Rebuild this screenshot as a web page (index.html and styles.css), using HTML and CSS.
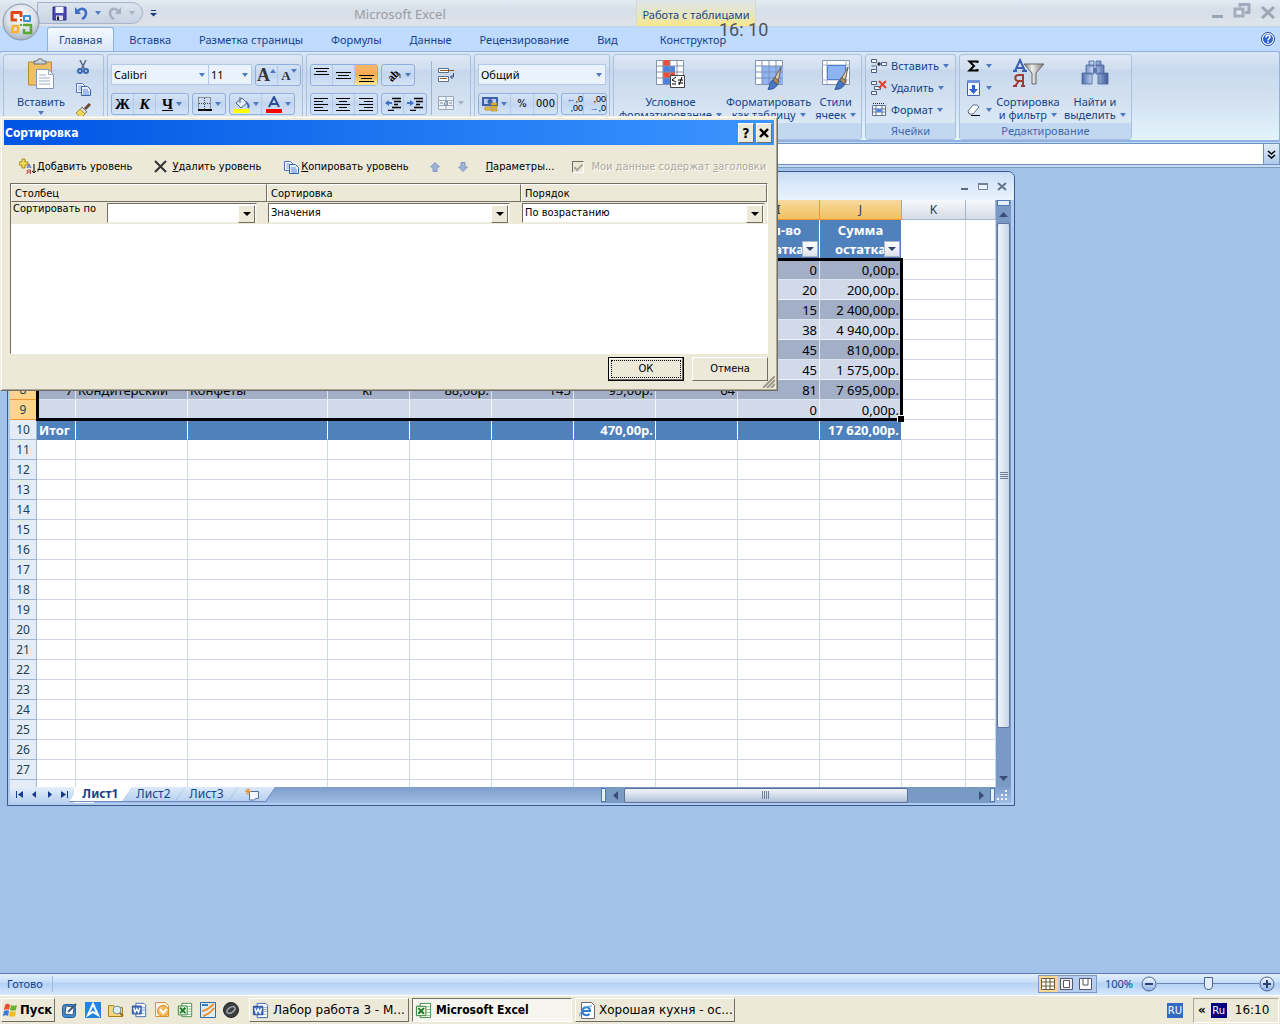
FILE: index.html
```
<!DOCTYPE html>
<html lang="ru">
 <head>
  <meta charset="UTF-8" />
  <meta name="viewport" content="width=device-width, initial-scale=1.0" />
  <title>Microsoft Excel</title>
  <link rel="stylesheet" href="styles.css" />
 </head>
 <body>
  <!-- shared icons -->
  <svg class="defs" aria-hidden="true">
   <defs>
    <linearGradient id="g-blue" x1="0" y1="0" x2="0" y2="1"><stop offset="0" stop-color="#f4f8ff" /><stop offset="1" stop-color="#8fb0e8" /></linearGradient>
    <linearGradient id="g-steel" x1="0" y1="0" x2="1" y2="0"><stop offset="0" stop-color="#4a6cae" /><stop offset=".4" stop-color="#c3d4f2" /><stop offset="1" stop-color="#3e5c9c" /></linearGradient>
    <linearGradient id="g-grey" x1="0" y1="0" x2="1" y2="0"><stop offset="0" stop-color="#777" /><stop offset=".4" stop-color="#eee" /><stop offset="1" stop-color="#777" /></linearGradient>
    <radialGradient id="g-orb" cx=".5" cy=".35" r=".65"><stop offset="0" stop-color="#fff" /><stop offset=".6" stop-color="#dbe1e8" /><stop offset="1" stop-color="#a4b0c0" /></radialGradient>
    <symbol id="i-copy" viewBox="0 0 16 16">
     <path d="M1.500 2.500h6l2 2v7h-8z" fill="#fff" stroke="#4a72b8" /><path d="M3 5h4M3 7h4M3 9h4" stroke="#7fa0d8" />
     <path d="M6.500 5.500h6l3 3v6h-9z" fill="#e8f0ff" stroke="#3a62a8" /><path d="M8 9h5M8 11h6M8 13h6" stroke="#5f86cc" />
    </symbol>
    <symbol id="i-brush" viewBox="0 0 16 32">
     <path d="M15 1L8 13l4 3z" fill="#d8c9b4" stroke="#6d5a48" /><path d="M8 12l5 4-2 4-5-4z" fill="#b08a50" stroke="#555" /><path d="M6 15l5 5c-2 4-6 5-10 5 2-3 2-8 5-10z" fill="#4878c8" stroke="#2d508c" />
    </symbol>
    <symbol id="i-word" viewBox="0 0 18 18">
     <path d="M5.500 1.500h9l2 2v13h-11z" fill="#fff" stroke="#3a62b0" /><path d="M12 6h4M12 8h4M12 10h4M7 13h8" stroke="#8aa6dc" />
     <path d="M1.500 4.500h10v9h-10z" fill="#4672c4" stroke="#27468c" /><path d="M3 6.500l1.500 5 2-4 2 4L10 6.500" fill="none" stroke="#fff" stroke-width="1.500" />
    </symbol>
    <symbol id="i-excel" viewBox="0 0 18 18">
     <path d="M5.500 1.500h11v15h-11z" fill="#fff" stroke="#3d8a3d" /><path d="M12 5h4M12 8h4M12 11h4M12 14h4" stroke="#7cb87c" />
     <path d="M1.500 4.500h10v10h-10z" fill="#e9f6e4" stroke="#2b7a2b" /><path d="M3.500 6.500l6 6M9.500 6.500l-6 6" stroke="#1f7a28" stroke-width="2.200" />
    </symbol>
   </defs>
  </svg>

  <header class="titlebar">
   <div class="quick-access">
    <button class="flat" aria-label="Сохранить"><svg width="15" height="15" viewBox="0 0 15 15"><path d="M1 1h13v13H1z" fill="#4848b0" stroke="#2c2c80" /><path d="M3.500 1h8v6h-8z" fill="#f4f6ff" /><path d="M4 9.500h7V14H4z" fill="#dde" /><path d="M5 10.500h2V14H5z" fill="#223" /></svg></button>
    <button class="flat" aria-label="Отменить"><svg width="14" height="14" viewBox="0 0 14 14"><path d="M4 5c3-4 8-2 8 2 0 3-2 5-4 6" fill="none" stroke="#3c6cc8" stroke-width="2.500" /><path d="M1 1v7h6z" fill="#3c6cc8" /></svg></button>
    <i class="tri"></i>
    <button class="flat" aria-label="Вернуть"><svg width="14" height="14" viewBox="0 0 14 14"><path d="M10 5C7 1 2 3 2 7c0 3 2 5 4 6" fill="none" stroke="#a4afbf" stroke-width="2.500" /><path d="M13 1v7H7z" fill="#a4afbf" /></svg></button>
    <i class="tri tri-off"></i>
   </div>
   <button class="flat customize" aria-label="Настройка панели"><svg width="7" height="7" viewBox="0 0 7 7"><path d="M1 .5h5" stroke="#1b3a77" /><path d="M0 3h7L3.500 6.500z" fill="#1b3a77" /></svg></button>
   <div class="app-title">Microsoft Excel</div>
   <div class="context-title">Работа с таблицами</div>
   <div class="win-buttons">
    <button class="flat" aria-label="Свернуть"><svg width="12" height="17" viewBox="0 0 12 17"><path d="M0 13h11v3H0z" fill="#9aa5b4" /></svg></button>
    <button class="flat" aria-label="Восстановить"><svg width="18" height="18" viewBox="0 0 18 18"><path d="M7 5V2.500h9v8h-4" fill="none" stroke="#9fabba" stroke-width="3" /><path d="M2 7h8v7H2z" fill="#e6ebf1" stroke="#a3aebd" stroke-width="3" /></svg></button>
    <button class="flat" aria-label="Закрыть"><svg width="16" height="18" viewBox="0 0 16 18"><path d="M2 5l12 11M14 5L2 16" stroke="#9ba7b5" stroke-width="3" /></svg></button>
   </div>
   <button class="office-button" aria-label="Office">
    <svg width="38" height="38" viewBox="0 0 38 38">
     <circle cx="19" cy="19" r="18" fill="url(#g-orb)" stroke="#8795ab" />
     <g fill="none" stroke-width="3" stroke-linejoin="round">
      <path d="M15 17H10V9.500h9V14" stroke="#dc4a1c" /><path d="M22 13h6v5h-6z" stroke="#3f8fd8" stroke-width="2" />
      <path d="M11 23h5v6h-6z" stroke="#f6b42c" stroke-width="2.500" /><path d="M21 22h8v8h-7v-4" stroke="#5da830" stroke-width="2.500" />
     </g>
     <path d="M18 16h2v2h-2z" fill="#dc4a1c" /><path d="M18 21h2v2h-2z" fill="#5da830" />
    </svg>
   </button>
   <span class="osd-clock">16: 10</span>
  </header>

  <nav class="tabs">
   <a class="tab tab-active" href="#home">Главная</a>
   <a class="tab" href="#insert">Вставка</a>
   <a class="tab" href="#layout">Разметка страницы</a>
   <a class="tab" href="#formulas">Формулы</a>
   <a class="tab" href="#data">Данные</a>
   <a class="tab" href="#review">Рецензирование</a>
   <a class="tab" href="#view">Вид</a>
   <a class="tab tab-context" href="#design">Конструктор</a>
   <button class="flat help" aria-label="Справка"><svg width="14" height="14" viewBox="0 0 14 14"><circle cx="7" cy="7" r="6.500" fill="#fff" stroke="#2a4a90" /><circle cx="7" cy="7" r="5" fill="#2d62d0" /><path d="M5 5.500c0-3 4-3 4-.5C9 6.500 7 6.500 7 8.500M7 9.500v1.500" fill="none" stroke="#fff" stroke-width="1.500" /></svg></button>
  </nav>

  <section class="ribbon">
   <div class="group g-clip">
    <div class="group-body">
     <button class="big paste">
      <svg width="28" height="32" viewBox="0 0 28 32"><path d="M1.500 4h23v23h-23z" fill="#efbf62" stroke="#b98a34" /><path d="M7 6V3h3c0-3 6-3 6 0h3v3z" fill="#ccd0d8" stroke="#6a6f78" /><path d="M9.500 11.500h12l5 5v14h-17z" fill="#fff" stroke="#8496b4" /><path d="M21.500 11.500v5h5M12 17h7M12 20h11M12 23h11M12 26h11" fill="none" stroke="#9aa9c4" /></svg>
      <span>Вставить</span><i class="tri"></i>
     </button>
     <div class="small-col">
      <button class="flat" aria-label="Вырезать"><svg width="16" height="16" viewBox="0 0 16 16"><path d="M5 1l5 10M11 1L6 11" stroke="#5a6a80" stroke-width="1.600" /><circle cx="5" cy="12" r="2" fill="none" stroke="#3a66b0" stroke-width="2" /><circle cx="11" cy="12" r="2" fill="none" stroke="#3a66b0" stroke-width="2" /></svg></button>
      <button class="flat" aria-label="Копировать"><svg width="16" height="16"><use href="#i-copy" /></svg></button>
      <button class="flat" aria-label="Формат по образцу"><svg width="16" height="16" viewBox="0 0 16 16"><path d="M15 1l-5 5" stroke="#6b4a30" stroke-width="3" /><path d="M7 4l5 5-3 2-4-4z" fill="#ddd" stroke="#777" /><path d="M5 6l5 5-4 4-5-5z" fill="#f1d458" stroke="#b09028" /></svg></button>
     </div>
    </div>
    <div class="group-label"></div>
   </div>

   <div class="group g-font">
    <div class="group-body rows">
     <div class="row">
      <div class="joined"><span class="combo font-name"><select aria-label="Шрифт"><option>Calibri</option></select></span><span class="combo font-size"><select aria-label="Размер"><option>11</option></select></span></div>
      <div class="btns"><button class="serif grow" aria-label="Увеличить">A<i class="tri tri-up"></i></button><button class="serif shrink" aria-label="Уменьшить">A<i class="tri"></i></button></div>
     </div>
     <div class="row">
      <div class="btns"><button class="serif">Ж</button><button class="serif italic">К</button><button class="serif under wide"><u>Ч</u><i class="tri"></i></button></div>
      <div class="btns"><button class="wide" aria-label="Границы"><svg width="14" height="14" viewBox="0 0 14 14"><path d="M.5 .5h12v12M.5 .5v12M6.500 1v12M1 6.500h12" fill="none" stroke="#444" stroke-dasharray="1 1" /><path d="M0 13h14" stroke="#000" stroke-width="2" /></svg><i class="tri"></i></button></div>
      <div class="btns"><button class="wide" aria-label="Заливка"><svg width="17" height="17" viewBox="0 0 17 17"><path d="M3 7l6-5 5 5-6 5z" fill="#e4ecf8" stroke="#48607f" /><path d="M13 6c3 2 3 4 2 6" fill="none" stroke="#3a66b8" stroke-width="2" /><path d="M7 1v6" stroke="#48607f" /><path d="M0 13h16v4H0z" fill="#ff0" /></svg><i class="tri"></i></button><button class="wide" aria-label="Цвет текста"><svg width="16" height="17" viewBox="0 0 16 17"><path d="M3 11l5-10 5 10M5 8h6" fill="none" stroke="#2c4f94" stroke-width="2" /><path d="M0 13h16v4H0z" fill="#f00" /></svg><i class="tri"></i></button></div>
     </div>
    </div>
    <div class="group-label"></div>
   </div>

   <div class="group g-align">
    <div class="group-body">
     <div class="rows">
      <div class="row">
       <div class="btns"><button aria-label="По верхнему краю"><svg width="15" height="16" viewBox="0 0 15 16"><path d="M0 1.500h15M2 4.500h11M0 7.500h15" stroke="#000" /></svg></button><button aria-label="По середине"><svg width="15" height="16" viewBox="0 0 15 16"><path d="M0 5.500h15M2 8.500h11M0 11.500h15" stroke="#000" /></svg></button><button class="pressed" aria-label="По нижнему краю"><svg width="15" height="16" viewBox="0 0 15 16"><path d="M0 8.500h15M2 11.500h11M0 14.500h15" stroke="#000" /></svg></button></div>
       <div class="btns"><button class="wide" aria-label="Ориентация"><svg width="16" height="16" viewBox="0 0 16 16"><text class="ab" x="1" y="12" transform="rotate(-45 7 8)">ab</text><path d="M6 15l8-8M14 11V7h-4" fill="none" stroke="#444" /></svg><i class="tri"></i></button></div>
      </div>
      <div class="row">
       <div class="btns"><button aria-label="По левому краю"><svg width="15" height="14" viewBox="0 0 15 14"><path d="M0 1.500h14M0 4.500h9M0 7.500h14M0 10.500h9M0 13.500h14" stroke="#000" /></svg></button><button aria-label="По центру"><svg width="15" height="14" viewBox="0 0 15 14"><path d="M0 1.500h14M3 4.500h8M0 7.500h14M3 10.500h8M0 13.500h14" stroke="#000" /></svg></button><button aria-label="По правому краю"><svg width="15" height="14" viewBox="0 0 15 14"><path d="M0 1.500h14M5 4.500h9M0 7.500h14M5 10.500h9M0 13.500h14" stroke="#000" /></svg></button></div>
       <div class="btns"><button aria-label="Уменьшить отступ"><svg width="16" height="14" viewBox="0 0 16 14"><path d="M7 1.500h9M9 4.500h7M9 7.500h4M7 10.500h9M3 13.500h6" stroke="#000" stroke-width="1.500" /><path d="M0 6l4-3v2h3v2H4v2z" fill="#3f6fc8" /></svg></button><button aria-label="Увеличить отступ"><svg width="16" height="14" viewBox="0 0 16 14"><path d="M7 1.500h9M9 4.500h7M9 7.500h4M7 10.500h9M3 13.500h6" stroke="#000" stroke-width="1.500" /><path d="M7 6L3 3v2H0v2h3v2z" fill="#3f6fc8" /></svg></button></div>
      </div>
     </div>
     <div class="wrap-col">
      <button class="flat" aria-label="Перенос текста"><svg width="17" height="16" viewBox="0 0 17 16"><path d="M.5 1.500h10v4H.5zM.5 9.500h10v5H.5z" fill="#fff" stroke="#5d708c" /><path d="M2 3.500h14M2 11.500h7" stroke="#8a5a2c" /><path d="M15.500 6v4h-3m2-2l-2 2 2 2" fill="none" stroke="#34507c" /></svg></button>
      <button class="flat" aria-label="Объединить"><svg width="16" height="14" viewBox="0 0 16 14"><path d="M.5 .5h15v13H.5zM.5 4.500h15M.5 9.500h15M8 .5v4M8 9.500v4" fill="#eef2f8" stroke="#9aa9be" /><path d="M2 7h3M11 7h3" stroke="#7b8ca6" /><path d="M7 5.500h2.500V9H6.500V7h3" fill="none" stroke="#7b8ca6" /></svg><i class="tri tri-off"></i></button>
     </div>
    </div>
    <div class="group-label"></div>
   </div>

   <div class="group g-num">
    <div class="group-body rows">
     <div class="row"><span class="combo num-format"><select aria-label="Числовой формат"><option>Общий</option></select></span></div>
     <div class="row">
      <div class="btns"><button class="wide" aria-label="Денежный формат"><svg width="16" height="16" viewBox="0 0 16 16"><path d="M0 1h16v9H0z" fill="#3d62a8" /><path d="M2 3h12v5H2z" fill="#b8cdf0" /><circle cx="8" cy="5.500" r="2.500" fill="#3d62a8" /><path d="M9 7h6v2H9zM9 10h6v2H9zM9 13h6v2H9zM3 11h5v3H3z" fill="#f0c040" stroke="#a57816" stroke-width=".6" /></svg><i class="tri"></i></button><button class="pct">%</button><button class="pct">000</button></div>
      <div class="btns digits"><button><i>←</i>,0<br />,00</button><button>,00<br /><i>→</i>,0</button></div>
     </div>
    </div>
    <div class="group-label"></div>
   </div>

   <div class="group g-styles">
    <div class="group-body">
     <button class="big">
      <svg width="32" height="32" viewBox="0 0 32 32"><path d="M2.500 2.500h27v24h-27z" fill="#fff" stroke="#8393ac" /><path d="M9 2h7v24H9z" fill="#e5503c" /><path d="M9 8h12v6H9z" fill="#4a82e4" /><path d="M9 20h7v6H9z" fill="#4a82e4" /><path d="M9 14h12v6H9z" fill="#e5503c" /><path d="M2 8h28M2 14h28M2 20h28M9 2v24M16 2v24M23 2v24" stroke="#8393ac" /><path d="M16.500 17.500h14v12h-14z" fill="#fff" stroke="#444" /><path d="M22 19l-4 3 4 2M18 26h4M24 22h5M24 25h5M28 19l-3 8" fill="none" stroke="#000" /></svg>
      <span>Условное</span><span>форматирование<i class="tri"></i></span>
     </button>
     <button class="big">
      <svg width="32" height="32" viewBox="0 0 32 32"><path d="M2.500 2.500h27v24h-27z" fill="#fff" stroke="#8393ac" /><path d="M9 8h21v18H9z" fill="#8fb4f4" /><path d="M2 8h28M2 14h28M2 20h28M9 2v24M16 2v24M23 2v24" stroke="#7b8fb8" /><use href="#i-brush" x="12" y="8" width="19" height="30" /></svg>
      <span>Форматировать</span><span>как таблицу<i class="tri"></i></span>
     </button>
     <button class="big">
      <svg width="32" height="32" viewBox="0 0 32 32"><path d="M2.500 2.500h27v24h-27z" fill="#fff" stroke="#8393ac" /><path d="M2 7h28M2 22h28M7 2v24M26 2v24" stroke="#a3b1c8" /><path d="M7.500 7.500h18v14h-18z" fill="#8fb4f4" stroke="#4f7ed8" /><use href="#i-brush" x="12" y="8" width="19" height="30" /></svg>
      <span>Стили</span><span>ячеек<i class="tri"></i></span>
     </button>
    </div>
    <div class="group-label"></div>
   </div>

   <div class="group g-cells">
    <div class="group-body list">
     <button class="line"><svg width="16" height="16" viewBox="0 0 16 16"><path d="M.5 1.500h5v3h-5zM.5 11.500h5v3h-5zM10.500 4.500h5v3h-5zM.5 8h5v3" fill="#f4f8ff" stroke="#4b5f80" /><path d="M6 6h4M8 4v4" stroke="#000" /></svg>Вставить<i class="tri"></i></button>
     <button class="line"><svg width="16" height="16" viewBox="0 0 16 16"><path d="M.5 1.500h5v3h-5zM.5 11.500h5v3h-5zM3.500 6.500h6v3h-6z" fill="#f4f8ff" stroke="#4b5f80" /><path d="M8 1l7 7M15 1L8 8" stroke="#e0402c" stroke-width="2" /></svg>Удалить<i class="tri"></i></button>
     <button class="line"><svg width="16" height="16" viewBox="0 0 16 16"><path d="M1.500 3.500h13v10h-13zM1 7h14M1 10h14M5 3v10M11 3v10" fill="#fff" stroke="#5f7395" /><path d="M5.500 7h5v3h-5z" fill="#4f86e0" /><path d="M2 1.500h12" stroke="#222" stroke-dasharray="1 1" /></svg>Формат<i class="tri"></i></button>
    </div>
    <div class="group-label">Ячейки</div>
   </div>

   <div class="group g-edit">
    <div class="group-body">
     <div class="list">
      <button class="line" aria-label="Сумма"><svg width="13" height="14" viewBox="0 0 13 14"><path d="M10.500 4V2.500h-8L7 7l-4.500 4.500h8V10" fill="none" stroke="#000" stroke-width="2" /></svg><i class="tri"></i></button>
      <button class="line" aria-label="Заполнить"><svg width="13" height="16" viewBox="0 0 13 16"><path d="M.5 .5h12v15H.5z" fill="#f4f8ff" stroke="#3f62a8" /><path d="M0 0h13v3H0z" fill="#6f93d4" /><path d="M5 5h3v4h3l-4.500 5L2 9h3z" fill="#2f62d0" /></svg><i class="tri"></i></button>
      <button class="line" aria-label="Очистить"><svg width="13" height="14" viewBox="0 0 13 14"><path d="M1 8l5-6h4l2 2-6 7H2z" fill="#fff" stroke="#5f6f88" /><path d="M4 12.500h9" stroke="#000" /></svg><i class="tri"></i></button>
     </div>
     <button class="big">
      <svg width="32" height="32" viewBox="0 0 32 32"><path d="M12 6h20l-8 9v11h-4V15z" fill="url(#g-grey)" stroke="#666" /><path d="M3 13L8 2l5 11M5 10h6M1 13h4M10 13h5" fill="none" stroke="#3a5fb0" stroke-width="2" /><path d="M11 28V17H7c-5 0-5 6 0 6h4M7 23l-4 5M1 28h4M9 28h4" fill="none" stroke="#a03c34" stroke-width="2" /></svg>
      <span>Сортировка</span><span>и фильтр<i class="tri"></i></span>
     </button>
     <button class="big">
      <svg width="32" height="32" viewBox="0 0 32 32"><g fill="url(#g-steel)" stroke="#4a659c" stroke-width=".8"><path d="M10 3h5v5h-5zM17 3h5v5h-5zM7 7h8v9H7zM17 7h8v9h-8zM3 15h10v11H3zM19 15h10v11H19z" /></g><path d="M14 10h4v5h-4z" fill="#5a78b4" /></svg>
      <span>Найти и</span><span>выделить<i class="tri"></i></span>
     </button>
    </div>
    <div class="group-label">Редактирование</div>
   </div>
  </section>

  <div class="formula-bar">
   <input class="formula" type="text" aria-label="Строка формул" />
   <button class="expand" aria-label="Развернуть"><svg width="9" height="9" viewBox="0 0 9 9"><path d="M1 1l3.500 3L8 1M1 5l3.500 3L8 5" fill="none" stroke="#000" stroke-width="1.500" /></svg></button>
  </div>

  <main class="workspace">
   <section class="book">
    <div class="book-title">
     <button class="flat" aria-label="Свернуть книгу"><svg width="9" height="9" viewBox="0 0 9 9"><path d="M1 7h7" stroke="#5b6b82" stroke-width="2" /></svg></button>
     <button class="flat" aria-label="Развернуть книгу"><svg width="10" height="9" viewBox="0 0 10 9"><path d="M.5 1.500h9v6h-9z" fill="#eef4fd" stroke="#6f8098" /><path d="M0 2h10" stroke="#6f8098" stroke-width="2" /></svg></button>
     <button class="flat" aria-label="Закрыть книгу"><svg width="10" height="9" viewBox="0 0 10 9"><path d="M1 1l8 7M9 1L1 8" stroke="#62748e" stroke-width="2" /></svg></button>
    </div>
    <div class="book-main">
     <div class="sheet">
      <table class="grid">
       <colgroup>
        <col class="c-head" /><col class="c-a" /><col class="c-b" /><col class="c-c" /><col class="c-n" span="7" /><col class="c-k" /><col class="c-l" />
       </colgroup>
       <thead>
        <tr><th></th><th></th><th></th><th></th><th></th><th></th><th></th><th></th><th></th><th class="sel">I</th><th class="sel">J</th><th>K</th><th></th></tr>
       </thead>
       <tbody>
        <tr class="caption"><th></th><td></td><td></td><td></td><td></td><td></td><td></td><td></td><td></td><td>Кол-во<br />остатка<button class="filter" aria-label="Фильтр"><i class="tri"></i></button></td><td>Сумма<br />остатка<button class="filter" aria-label="Фильтр"><i class="tri"></i></button></td><td></td><td></td></tr>
        <tr class="dark"><th></th><td></td><td></td><td></td><td></td><td></td><td></td><td></td><td></td><td>0</td><td>0,00р.</td><td></td><td></td></tr>
        <tr class="light"><th></th><td></td><td></td><td></td><td></td><td></td><td></td><td></td><td></td><td>20</td><td>200,00р.</td><td></td><td></td></tr>
        <tr class="dark"><th></th><td></td><td></td><td></td><td></td><td></td><td></td><td></td><td></td><td>15</td><td>2 400,00р.</td><td></td><td></td></tr>
        <tr class="light"><th></th><td></td><td></td><td></td><td></td><td></td><td></td><td></td><td></td><td>38</td><td>4 940,00р.</td><td></td><td></td></tr>
        <tr class="dark"><th></th><td></td><td></td><td></td><td></td><td></td><td></td><td></td><td></td><td>45</td><td>810,00р.</td><td></td><td></td></tr>
        <tr class="light"><th></th><td></td><td></td><td></td><td></td><td></td><td></td><td></td><td></td><td>45</td><td>1 575,00р.</td><td></td><td></td></tr>
        <tr class="dark"><th>8</th><td>7</td><td class="text">Кондитерский</td><td class="text">Конфеты</td><td class="mid">кг</td><td>88,00р.</td><td>145</td><td>95,00р.</td><td>64</td><td>81</td><td>7 695,00р.</td><td></td><td></td></tr>
        <tr class="light"><th>9</th><td></td><td></td><td></td><td></td><td></td><td></td><td></td><td></td><td>0</td><td>0,00р.</td><td></td><td></td></tr>
        <tr class="total"><th>10</th><td class="text">Итог</td><td></td><td></td><td></td><td></td><td></td><td>470,00р.</td><td></td><td></td><td>17 620,00р.</td><td></td><td></td></tr>
        <tr><th>11</th><td></td><td></td><td></td><td></td><td></td><td></td><td></td><td></td><td></td><td></td><td></td><td></td></tr>
        <tr><th>12</th><td></td><td></td><td></td><td></td><td></td><td></td><td></td><td></td><td></td><td></td><td></td><td></td></tr>
        <tr><th>13</th><td></td><td></td><td></td><td></td><td></td><td></td><td></td><td></td><td></td><td></td><td></td><td></td></tr>
        <tr><th>14</th><td></td><td></td><td></td><td></td><td></td><td></td><td></td><td></td><td></td><td></td><td></td><td></td></tr>
        <tr><th>15</th><td></td><td></td><td></td><td></td><td></td><td></td><td></td><td></td><td></td><td></td><td></td><td></td></tr>
        <tr><th>16</th><td></td><td></td><td></td><td></td><td></td><td></td><td></td><td></td><td></td><td></td><td></td><td></td></tr>
        <tr><th>17</th><td></td><td></td><td></td><td></td><td></td><td></td><td></td><td></td><td></td><td></td><td></td><td></td></tr>
        <tr><th>18</th><td></td><td></td><td></td><td></td><td></td><td></td><td></td><td></td><td></td><td></td><td></td><td></td></tr>
        <tr><th>19</th><td></td><td></td><td></td><td></td><td></td><td></td><td></td><td></td><td></td><td></td><td></td><td></td></tr>
        <tr><th>20</th><td></td><td></td><td></td><td></td><td></td><td></td><td></td><td></td><td></td><td></td><td></td><td></td></tr>
        <tr><th>21</th><td></td><td></td><td></td><td></td><td></td><td></td><td></td><td></td><td></td><td></td><td></td><td></td></tr>
        <tr><th>22</th><td></td><td></td><td></td><td></td><td></td><td></td><td></td><td></td><td></td><td></td><td></td><td></td></tr>
        <tr><th>23</th><td></td><td></td><td></td><td></td><td></td><td></td><td></td><td></td><td></td><td></td><td></td><td></td></tr>
        <tr><th>24</th><td></td><td></td><td></td><td></td><td></td><td></td><td></td><td></td><td></td><td></td><td></td><td></td></tr>
        <tr><th>25</th><td></td><td></td><td></td><td></td><td></td><td></td><td></td><td></td><td></td><td></td><td></td><td></td></tr>
        <tr><th>26</th><td></td><td></td><td></td><td></td><td></td><td></td><td></td><td></td><td></td><td></td><td></td><td></td></tr>
        <tr><th>27</th><td></td><td></td><td></td><td></td><td></td><td></td><td></td><td></td><td></td><td></td><td></td><td></td></tr>
        <tr><th></th><td></td><td></td><td></td><td></td><td></td><td></td><td></td><td></td><td></td><td></td><td></td><td></td></tr>
       </tbody>
      </table>
      <div class="selection"></div>
     </div>
     <div class="vscroll">
      <i class="split-h"></i>
      <button class="flat arrow" aria-label="Вверх"><svg width="9" height="5" viewBox="0 0 9 5"><path d="M4.500 0L9 5H0z" fill="#3b4d78" /></svg></button>
      <div class="vthumb"><i class="grip"></i></div>
      <button class="flat arrow" aria-label="Вниз"><svg width="9" height="5" viewBox="0 0 9 5"><path d="M4.500 5L9 0H0z" fill="#3b4d78" /></svg></button>
     </div>
    </div>
    <div class="book-foot">
     <div class="sheet-nav">
      <button class="flat" aria-label="Первый лист"><svg width="7" height="7" viewBox="0 0 7 7"><path d="M.5 0v7" stroke="#123c8c" /><path d="M7 0v7L2 3.500z" fill="#123c8c" /></svg></button>
      <button class="flat" aria-label="Предыдущий лист"><svg width="7" height="7" viewBox="0 0 7 7"><path d="M5 0v7L1 3.500z" fill="#123c8c" /></svg></button>
      <button class="flat" aria-label="Следующий лист"><svg width="7" height="7" viewBox="0 0 7 7"><path d="M2 0v7l4-3.500z" fill="#123c8c" /></svg></button>
      <button class="flat" aria-label="Последний лист"><svg width="7" height="7" viewBox="0 0 7 7"><path d="M6.500 0v7" stroke="#123c8c" /><path d="M0 0v7l5-3.500z" fill="#123c8c" /></svg></button>
     </div>
     <div class="sheet-tabs">
      <a class="sheet-tab current" href="#s1"><span>Лист1</span></a>
      <a class="sheet-tab" href="#s2"><span>Лист2</span></a>
      <a class="sheet-tab" href="#s3"><span>Лист3</span></a>
      <a class="sheet-tab" href="#new" aria-label="Новый лист"><svg width="16" height="13" viewBox="0 0 16 13"><path d="M5.500 3.500h9v7h-3l-1 1.500h-5z" fill="#f6f9ff" stroke="#54709c" /><path d="M4 0v7M1 3.500h6M2 1l4 5M6 1L2 6" stroke="#e8902c" /></svg></a>
     </div>
     <div class="hscroll">
      <i class="split-v"></i>
      <button class="flat arrow" aria-label="Влево"><svg width="5" height="9" viewBox="0 0 5 9"><path d="M0 4.500L5 0v9z" fill="#3b4d78" /></svg></button>
      <div class="hthumb"><i class="grip grip-v"></i></div>
      <button class="flat arrow right" aria-label="Вправо"><svg width="5" height="9" viewBox="0 0 5 9"><path d="M5 4.500L0 0v9z" fill="#3b4d78" /></svg></button>
      <i class="split-v"></i>
     </div>
     <svg class="corner" width="16" height="15" viewBox="0 0 16 15"><path d="M10 3h2v2h-2zM6 7h2v2H6zM10 7h2v2h-2zM2 11h2v2H2zM6 11h2v2H6zM10 11h2v2h-2z" fill="#f2f7ff" /></svg>
    </div>
   </section>
  </main>

  <footer class="status">
   <span class="ready">Готово</span>
   <div class="views">
    <button class="view-on" aria-label="Обычный"><svg width="14" height="12" viewBox="0 0 14 12"><path d="M.5 .5h13v11H.5zM1 4h12M1 8h12M5 1v10M9 1v10" fill="#fff" stroke="#6a5a38" /></svg></button>
    <button aria-label="Разметка"><svg width="13" height="12" viewBox="0 0 13 12"><path d="M.5 .5h12v11H.5z" fill="#eee" stroke="#556" /><path d="M3.500 2.500h6v7h-6z" fill="#fff" stroke="#556" /></svg></button>
    <button aria-label="Страничный"><svg width="13" height="12" viewBox="0 0 13 12"><path d="M.5 .5h12v11H.5z" fill="#fff" stroke="#556" /><path d="M4 1v6h5V1" fill="none" stroke="#556" /></svg></button>
   </div>
   <button class="flat percent">100%</button>
   <button class="flat" aria-label="Мельче"><svg width="16" height="16" viewBox="0 0 16 16"><circle cx="8" cy="8" r="7" fill="url(#g-blue)" stroke="#4c6590" /><path d="M4 8h8" stroke="#2c4270" stroke-width="2" /></svg></button>
   <input class="zoom" type="range" min="0" max="100" value="50" aria-label="Масштаб" />
   <button class="flat" aria-label="Крупнее"><svg width="16" height="16" viewBox="0 0 16 16"><circle cx="8" cy="8" r="7" fill="url(#g-blue)" stroke="#4c6590" /><path d="M4 8h8M8 4v8" stroke="#2c4270" stroke-width="2" /></svg></button>
  </footer>

  <div class="taskbar">
   <button class="start"><svg width="16" height="16" viewBox="0 0 16 16"><path d="M2 3c2-2 4-1 5 0L6 8C5 7 3 7 1 8z" fill="#e8502c" /><path d="M8 3c2 1 4 1 6 0l-1 5c-2 1-4 1-6 0z" fill="#6cb02c" /><path d="M1 9c2-1 4-1 5 0l-1 5c-1-1-3-1-5 0z" fill="#3c78d8" /><path d="M7 9c2 1 4 1 6 0l-1 5c-2 1-4 1-6 0z" fill="#f4bc24" /></svg>Пуск</button>
   <div class="launch">
    <button class="flat" aria-label="Рабочий стол"><svg width="16" height="16" viewBox="0 0 16 16"><rect x=".5" y="2.500" width="13" height="13" rx="3" fill="#3f8fd4" stroke="#1f5c9c" /><path d="M4 4l8 1-1 8-8-1z" fill="#fff" stroke="#456" /><path d="M14 2L6 10" stroke="#3a5a80" stroke-width="2" /></svg></button>
    <button class="flat" aria-label="Почта"><svg width="16" height="16" viewBox="0 0 16 16"><path d="M0 0h16v16H0z" fill="#2384e0" /><path d="M3 13L8 2l5 11-5-3z" fill="none" stroke="#fff" stroke-width="2" /></svg></button>
    <button class="flat" aria-label="Поиск"><svg width="16" height="16" viewBox="0 0 16 16"><path d="M.5 3.500h5l1 2h8v9H.5z" fill="#f6d878" stroke="#a88020" /><circle cx="9" cy="8" r="4" fill="#dcecf8" stroke="#788ca0" /><path d="M12 11l3 3" stroke="#986c30" stroke-width="2" /></svg></button>
    <button class="flat" aria-label="Word"><svg width="16" height="16"><use href="#i-word" /></svg></button>
    <button class="flat" aria-label="Outlook"><svg width="16" height="16" viewBox="0 0 16 16"><path d="M1.500 .5h10l3 3v11h-13z" fill="#fff4dc" stroke="#d8943c" /><circle cx="9" cy="9" r="5.500" fill="#f6c060" stroke="#d8862c" /><path d="M6 7l3 4 4-4" fill="none" stroke="#fff" stroke-width="2" /></svg></button>
    <button class="flat" aria-label="Excel"><svg width="16" height="16"><use href="#i-excel" /></svg></button>
    <button class="flat" aria-label="Редактор"><svg width="16" height="16" viewBox="0 0 16 16"><path d="M.5 .5h15v15H.5z" fill="#dceefa" stroke="#2d6ca8" /><path d="M2 9c5 0 8-4 12-7M3 14c4-1 8-4 11-8" fill="none" stroke="#ee9030" stroke-width="2" /><path d="M2 3h6" stroke="#2d7cc8" stroke-width="2" /></svg></button>
    <button class="flat" aria-label="Плеер"><svg width="16" height="16" viewBox="0 0 16 16"><circle cx="8" cy="8" r="7.500" fill="#3c3e40" stroke="#222" /><ellipse cx="8" cy="8" rx="4.500" ry="2.500" fill="none" stroke="#a4a8ac" stroke-width="1.500" transform="rotate(-35 8 8)" /></svg></button>
   </div>
   <div class="tasks">
    <button class="task"><svg width="17" height="17"><use href="#i-word" /></svg><span>Лабор работа 3 - М...</span></button>
    <button class="task task-on"><svg width="17" height="17"><use href="#i-excel" /></svg><span>Microsoft Excel</span></button>
    <button class="task"><svg width="17" height="17" viewBox="0 0 17 17"><path d="M3.500 .5h10l3 3v13h-13z" fill="#fff" stroke="#667" /><path d="M4 9h8c0-5-7-5-7.500 0 0 5 5 5 7 3" fill="none" stroke="#2c7cd0" stroke-width="2" /><path d="M2 14C0 12 8 3 14 4" fill="none" stroke="#4c9ce0" /></svg><span>Хорошая кухня - ос...</span></button>
   </div>
   <span class="lang">RU</span>
   <div class="tray"><b>«</b><span class="lang lang-dark">Ru</span><time>16:10</time></div>
  </div>

  <section class="dialog" role="dialog" aria-label="Сортировка">
   <div class="dialog-title">
    <span>Сортировка</span>
    <button class="cap" aria-label="Справка">?</button>
    <button class="cap" aria-label="Закрыть"><svg width="10" height="10" viewBox="0 0 10 10"><path d="M1 1l8 8M9 1L1 9" stroke="#000" stroke-width="2.400" /></svg></button>
   </div>
   <div class="dialog-tools">
    <button class="flat add"><svg width="17" height="17" viewBox="0 0 17 17"><path d="M3 1h3v3h3v3H6v3H3V7H0V4h3z" fill="#f4dc58" stroke="#a48c18" /><path d="M8 10l2-4 2 4M9 9h2" fill="none" stroke="#4468b8" /><path d="M11.500 16v-4H9.500c-2 0-2 2 0 2h2M9 14l-1.500 2" fill="none" stroke="#a83c34" /><path d="M15 6v9M13 13l2 2 2-2" fill="none" stroke="#000" /></svg><span>Доб<u>а</u>вить уровень</span></button>
    <button class="flat del"><svg width="13" height="13" viewBox="0 0 13 13"><path d="M1 1l11 11M12 1L1 12" stroke="#333" stroke-width="2" /></svg><span><u>У</u>далить уровень</span></button>
    <button class="flat dup"><svg width="16" height="16"><use href="#i-copy" /></svg><span><u>К</u>опировать уровень</span></button>
    <i class="bar"></i>
    <button class="flat" aria-label="Вверх" disabled><svg width="10" height="10" viewBox="0 0 10 10"><path d="M5 .5L9.500 5H7v4.500H3V5H.5z" fill="#9db2dc" stroke="#8399c4" /></svg></button>
    <button class="flat" aria-label="Вниз" disabled><svg width="10" height="10" viewBox="0 0 10 10"><path d="M5 9.500L.5 5H3V.5h4V5h2.500z" fill="#9db2dc" stroke="#8399c4" /></svg></button>
    <button class="flat"><span><u>П</u>араметры...</span></button>
    <label class="headers"><input type="checkbox" checked disabled /><span>Мои данные содержат <u>з</u>аголовки</span></label>
   </div>
   <div class="levels">
    <div class="levels-head"><span>Столбец</span><span>Сортировка</span><span>Порядок</span></div>
    <div class="levels-row">
     <div class="by"><label for="sort-by">Сортировать по</label><span class="drop"><select id="sort-by"><option></option></select></span></div>
     <span class="drop"><select aria-label="Сортировка"><option>Значения</option></select></span>
     <span class="drop"><select aria-label="Порядок"><option>По возрастанию</option></select></span>
    </div>
   </div>
   <div class="dialog-actions">
    <button class="action default">ОК</button>
    <button class="action">Отмена</button>
   </div>
   <svg class="resize" width="12" height="12" viewBox="0 0 12 12"><path d="M0 12L12 0M4 12l8-8M8 12l4-4" stroke="#9d9a8c" stroke-width="2" /></svg>
  </section>
 </body>
</html>
```

FILE: styles.css
```
* {
 box-sizing: border-box;
}

body {
 margin: 0;
 height: 100vh;
 overflow: hidden;
 display: flex;
 flex-direction: column;
 position: relative;
 font: 11px/16px "Noto Sans", "Open Sans", sans-serif;
 color: #15428b;
 background: #a3c2ea;
}

button,
input,
select {
 font: inherit;
 color: inherit;
 margin: 0;
}

a {
 color: inherit;
 text-decoration: none;
}

.defs {
 position: absolute;
 width: 0;
 height: 0;
}

svg {
 display: block;
 flex: none;
}

.flat {
 display: flex;
 align-items: center;
 justify-content: center;
 padding: 0;
 border: 0;
 background: none;
}

.tri {
 flex: none;
 display: inline-block;
 width: 0;
 height: 0;
 border: 3px solid transparent;
 border-top: 4px solid #4f7cc0;
 border-bottom: 0;
}

.tri-up {
 border-top: 0;
 border-bottom: 4px solid #4f7cc0;
}

.tri-off {
 border-top-color: #a9b4c2;
}

/* title bar */
.titlebar {
 position: relative;
 flex: none;
 display: flex;
 height: 27px;
 border-bottom: 1px solid #c5d3e3;
 background: linear-gradient(#e3ebf3, #d6dee8 40%, #dfe4ea);
}

.quick-access {
 display: flex;
 align-items: center;
 gap: 7px;
 width: 106px;
 height: 22px;
 margin: 2px 0 0 37px;
 padding-left: 14px;
 border: 1px solid #a5b4c8;
 border-radius: 0 11px 11px 0;
 background: linear-gradient(#dbe4ef, #c8d4e4);
}

.customize {
 width: 20px;
}

.app-title {
 flex: none;
 width: 282px;
 margin-left: 191px;
 font-size: 13px;
 line-height: 29px;
 color: #9b9da0;
}

.context-title {
 width: 120px;
 text-align: center;
 line-height: 30px;
 border: 1px solid #d5d9cf;
 border-width: 0 1px;
 background: linear-gradient(#dfe5e8, #e8e6bd 60%, #fbe88a);
}

.win-buttons {
 display: flex;
 align-items: flex-start;
 gap: 9px;
 margin: 2px 4px 0 auto;
}

.office-button {
 position: absolute;
 left: 2px;
 top: 3px;
 z-index: 2;
 padding: 0;
 border: 0;
 background: none;
}

.osd-clock {
 position: absolute;
 left: 719px;
 top: 21px;
 z-index: 2;
 font: 18px/18px Roboto, sans-serif;
 color: #4c5260;
}

/* ribbon tabs */
.tabs {
 flex: none;
 display: flex;
 gap: 2px;
 height: 24px;
 padding-left: 47px;
 background: #bfdbff;
}

.tab {
 padding: 0 13px;
 line-height: 26px;
}

.tab-active {
 padding: 0 11px;
 border: 1px solid #8db2e3;
 border-bottom: 0;
 border-radius: 3px 3px 0 0;
 background: linear-gradient(#f4f9ff, #dbe7f5);
 line-height: 24px;
 z-index: 1;
}

.tab-context {
 margin-left: 14px;
}

.help {
 margin: 0 5px 0 auto;
}

.ribbon {
 flex: none;
 display: flex;
 gap: 3px;
 height: 91px;
 padding: 2px 3px;
 border: 1px solid #8db2e3;
 border-width: 1px 1px 2px 0;
 border-radius: 3px;
 background: linear-gradient(#dbe6f4, #c9d9ed 20%, #d3e1f1 55%, #e3f4fd);
}

.group {
 flex: none;
 display: flex;
 flex-direction: column;
 height: 86px;
 border: 1px solid #a9c1de;
 border-radius: 3px;
 background: linear-gradient(#dee8f5, #d1dfef 16%, #c8d8ec 18%, #dae7f5 80%);
}

.group-body {
 flex: 1;
 min-height: 0;
 display: flex;
 padding: 0 3px;
}

.group-label {
 height: 16px;
 text-align: center;
 line-height: 16px;
 color: #4068ae;
 background: #c2d8f0;
}

.g-clip { width: 101px; }
.g-font { width: 196px; }
.g-align { width: 165px; }
.g-num { width: 136px; }
.g-styles { width: 249px; }
.g-cells { width: 91px; }
.g-edit { width: 173px; }

.rows {
 display: flex;
 flex-direction: column;
 gap: 7px;
 padding-top: 9px;
}

.row {
 display: flex;
 gap: 3px;
 height: 22px;
}

.joined {
 display: flex;
}

.combo {
 position: relative;
 height: 21px;
 border: 1px solid #b2cae9;
 background: #eaf2fb;
}

.combo::after {
 content: "";
 position: absolute;
 right: 3px;
 top: 8px;
 border: 3px solid transparent;
 border-top: 4px solid #4f7cc0;
 border-bottom: 0;
 pointer-events: none;
}

.combo select {
 width: 100%;
 height: 19px;
 padding: 0 2px;
 border: 0;
 appearance: none;
 background: none;
 color: #000;
}

.font-name { width: 98px; }
.font-size { width: 43px; border-left: 0; }
.num-format { width: 128px; }

.btns {
 display: flex;
 border: 1px solid #8fb0dc;
 border-radius: 3px;
 background: linear-gradient(#d5e3f5, #c3d6f0 50%, #d3e3f8);
}

.btns button {
 display: flex;
 align-items: center;
 justify-content: center;
 gap: 3px;
 min-width: 22px;
 padding: 0;
 border: 0;
 border-right: 1px solid #b3cbe8;
 background: none;
 color: #000;
}

.btns button:last-child {
 border-right: 0;
}

.btns .wide {
 min-width: 32px;
}

.btns .pressed {
 background: linear-gradient(#f8b86c, #fca951 50%, #ffe890);
}

.serif {
 font: bold 15px/20px "Liberation Serif", serif;
}

.btns .grow,
.btns .shrink {
 align-items: flex-start;
 gap: 0;
 color: #333;
}

.btns .grow {
 font-size: 18px;
}

.btns .shrink {
 font-size: 13px;
 line-height: 22px;
}

.btns .serif .tri-up,
.btns .shrink .tri {
 margin-top: 4px;
}

.italic {
 font-style: italic;
}

.ab {
 font: bold 11px "Liberation Serif", serif;
}

.btns .pct {
 min-width: 23px;
 font: 11px/20px "DejaVu Sans Condensed", Roboto, sans-serif;
}

.digits button {
 display: block;
 font: 9px/9px "Liberation Sans", sans-serif;
 text-align: right;
}

.digits i {
 font-style: normal;
 color: #2c62c8;
}

.wrap-col {
 display: flex;
 flex-direction: column;
 align-items: flex-start;
 gap: 13px;
 margin: 6px 0 8px 4px;
 padding: 6px 0 0 6px;
 border-left: 1px solid #9ab5d8;
}

.wrap-col .flat {
 gap: 4px;
}

.big {
 display: flex;
 flex-direction: column;
 align-items: center;
 flex: 1 0 auto;
 padding: 3px 2px 0;
 border: 0;
 background: none;
 line-height: 13px;
 white-space: nowrap;
}

.big span:first-of-type {
 margin-top: 5px;
}

.big .tri {
 margin: 0 0 2px 4px;
}

.paste {
 flex: 0 0 68px;
}

.paste .tri {
 margin: 3px 0 0;
}

.small-col {
 display: flex;
 flex-direction: column;
 gap: 6px;
 padding-top: 4px;
}

.list {
 display: flex;
 flex-direction: column;
}

.line {
 display: flex;
 align-items: center;
 gap: 4px;
 height: 22px;
 margin: 0;
 padding: 0 2px;
 border: 0;
 background: none;
}

.g-edit .list .line {
 gap: 6px;
 padding-left: 4px;
}

/* formula bar */
.formula-bar {
 flex: none;
 display: flex;
 height: 26px;
 padding: 1px 0 2px;
 border-bottom: 1px solid #7b9ac2;
 background: #c4daf5;
}

.formula {
 flex: 1;
 height: 22px;
 border: 1px solid #6d93c4;
 background: #fff;
}

.expand {
 width: 16px;
 height: 22px;
 padding: 0 3px;
 border: 1px solid #6d93c4;
 border-left: 0;
 background: linear-gradient(#e3edf9, #afc9ea);
}

/* workbook window */
.workspace {
 flex: 1;
 min-height: 0;
 padding: 3px 7px;
}

.book {
 width: 1008px;
 padding: 0 3px 2px 2px;
 border: 1px solid #385a8c;
 border-radius: 7px 7px 0 0;
 background: #b1ccf0;
}

.book-title {
 display: flex;
 align-items: center;
 justify-content: flex-end;
 gap: 9px;
 height: 28px;
 margin: 0 -3px 0 -2px;
 padding-right: 7px;
 border-radius: 6px 6px 0 0;
 background: linear-gradient(#c9dcf6, #d8e7fb 40%, #eaf3fe);
}

.book-main {
 display: flex;
 height: 587px;
}

.sheet {
 position: relative;
 flex: none;
 overflow: hidden;
 background: #fff;
}

.grid {
 width: 986px;
 table-layout: fixed;
 border-spacing: 0;
 font-size: 13px;
 line-height: 18px;
 color: #000;
}

.c-head { width: 27px; }
.c-a { width: 39px; }
.c-b { width: 112px; }
.c-c { width: 140px; }
.c-n { width: 82px; }
.c-k { width: 64px; }
.c-l { width: 30px; }

.grid th,
.grid td {
 height: 20px;
 padding: 0 2px;
 border: 1px solid #d0d7e5;
 border-width: 0 1px 1px 0;
 white-space: nowrap;
 overflow: hidden;
}

.grid th {
 padding: 1px 0 0;
 border-color: #9eb6ce;
 background: #e4ecf7;
 font-size: 12px;
 font-weight: normal;
 color: #223f4c;
}

.grid thead th {
 background: linear-gradient(#f7f9fc, #d5dbe5);
}

.grid td {
 text-align: right;
}

.grid thead .sel {
 border-color: #f29536;
 background: linear-gradient(#f9d99f, #f1c15f);
}

.grid .dark th,
.grid .light th {
 border-color: #f29536;
 background: #ffd58d;
}

.grid .text {
 text-align: left;
}

.grid .mid {
 text-align: center;
}

.dark td:nth-child(-n + 11) {
 border-color: #dce5f1;
 background: #a2afc6;
}

.light td:nth-child(-n + 11) {
 border-color: #f2f5fa;
 background: #d2daea;
}

.caption td:nth-child(-n + 11),
.total td:nth-child(-n + 11) {
 border-right-color: #fff;
 border-bottom-color: #4f81bd;
 background: #4f81bd;
 color: #fff;
 font-weight: bold;
}

.grid .caption td {
 position: relative;
 height: 40px;
 line-height: 19px;
}

.grid .caption td:nth-child(n + 10):nth-child(-n + 11) {
 text-align: center;
 padding: 0;
}

.filter {
 position: absolute;
 right: 1px;
 bottom: 2px;
 display: flex;
 align-items: center;
 justify-content: center;
 width: 16px;
 height: 16px;
 padding: 0;
 border: 1px solid #a8b3c4;
 background: linear-gradient(#fff, #dbe1ea);
}

.filter .tri {
 border-width: 4px 4px 0;
 border-top-color: #33456d;
}

/* selection frame over A2:J9 */
.selection {
 position: absolute;
 left: 26px;
 top: 58px;
 width: 867px;
 height: 163px;
 border: 3px solid #000;
}

.selection::after {
 content: "";
 position: absolute;
 right: -4px;
 bottom: -4px;
 width: 6px;
 height: 6px;
 border: 1px solid #fff;
 border-width: 1px 0 0 1px;
 background: #000;
}

.vscroll {
 display: flex;
 flex-direction: column;
 flex: 1;
 padding: 0 1px;
 background: #7a9ac6;
}

.split-h {
 height: 6px;
 border: 1px solid #4f79b2;
 background: #e6f0fc;
}

.arrow {
 flex: none;
 height: 17px;
}

.vthumb {
 height: 505px;
 display: flex;
 align-items: center;
 justify-content: center;
 border: 1px solid #5c759e;
 border-radius: 2px;
 background: linear-gradient(90deg, #f1f5fa, #c8d6e8);
}

.vthumb + .arrow {
 margin-top: auto;
}

.grip {
 width: 8px;
 height: 8px;
 background: repeating-linear-gradient(#71819c 0 1px, transparent 1px 2px);
}

.grip-v {
 background: repeating-linear-gradient(90deg, #71819c 0 1px, transparent 1px 2px);
}

.book-foot {
 display: flex;
 height: 16px;
 background: linear-gradient(#7d9dcb, #9fbbe2);
}

.sheet-nav {
 display: flex;
 align-items: center;
 justify-content: space-around;
 width: 64px;
 padding: 0 2px 2px;
 background: linear-gradient(#e4eefb, #b8d0f0);
}

.sheet-tabs {
 display: flex;
 font-size: 12px;
 background: linear-gradient(#fff, #fff) left / 20px 100% no-repeat;
}

.sheet-tab {
 display: flex;
 justify-content: center;
 align-items: center;
 width: 54px;
 height: 15px;
 margin-right: -1px;
 background: linear-gradient(#dce9fa, #b8d0f0);
 border: 1px solid #6c8fc0;
 border-width: 0 1px 1px 0;
 transform: skewX(-35deg);
}

/* keeps the label upright inside the slanted tab */
.sheet-tab > * {
 transform: skewX(35deg);
}

.sheet-tab:last-child {
 width: 38px;
}

.current {
 font-weight: bold;
 background: #fff;
}

.hscroll {
 display: flex;
 align-items: center;
 width: 394px;
 margin-left: auto;
 background: #7a9ac6;
}

.split-v {
 width: 5px;
 height: 14px;
 border: 1px solid #4f79b2;
 background: #e6f0fc;
}

.hscroll .arrow {
 width: 18px;
 height: 15px;
}

.hthumb {
 display: flex;
 align-items: center;
 justify-content: center;
 width: 284px;
 height: 15px;
 border: 1px solid #5c6f98;
 border-radius: 2px;
 background: linear-gradient(#f0f4f9, #d3deeb 50%, #aebfd8);
}

.hscroll .right {
 margin-left: auto;
}

/* status bar */
.status {
 flex: none;
 display: flex;
 align-items: center;
 height: 22px;
 padding: 0 5px 2px 0;
 border-top: 1px solid #567db0;
 background: linear-gradient(#e3effe, #c5dcf8 40%, #b3d0f5 45%, #d6e8fd);
}

.ready {
 width: 53px;
 padding-left: 7px;
 border-right: 1px solid #9bbbe3;
}

.views {
 display: flex;
 margin-left: auto;
 border: 1px solid #7d9ac4;
}

.views button {
 width: 19px;
 height: 16px;
 padding: 0 2px;
 border: 0;
 background: #b4cdf0;
}

.views .view-on {
 background: #fbd795;
}

.percent {
 width: 42px;
 margin: 0 1px;
}

.zoom {
 width: 102px;
 height: 14px;
 appearance: none;
 background: linear-gradient(#6b87b4, #6b87b4) center / 100% 1px no-repeat;
}

.zoom::-webkit-slider-thumb {
 appearance: none;
 width: 9px;
 height: 13px;
 border: 1px solid #4c6590;
 border-radius: 1px 1px 5px 5px;
 background: #e2ecfa;
}

/* taskbar */
.taskbar {
 flex: none;
 display: flex;
 align-items: center;
 height: 29px;
 padding: 0 1px;
 border-top: 1px solid #fff;
 background: #ece9d8;
 font: 12px/16px "DejaVu Sans", sans-serif;
 color: #000;
}

.start,
.task {
 display: flex;
 align-items: center;
 height: 24px;
 border: 1px solid;
 border-color: #fff #716f64 #716f64 #fff;
 background: #ece9d8;
}

.start {
 gap: 1px;
 width: 54px;
 padding: 0 1px;
 font: bold 13px/20px "DejaVu Sans Condensed", "Noto Sans", sans-serif;
}

.launch {
 display: flex;
 gap: 7px;
 margin: 0 10px 0 7px;
}

.tasks {
 display: flex;
 gap: 3px;
}

.task {
 gap: 4px;
 width: 160px;
 padding: 0 2px;
 white-space: nowrap;
}

.task-on {
 border-color: #716f64 #fff #fff #716f64;
 background: #f6f5ee;
 font-weight: bold;
 font-family: "DejaVu Sans Condensed", sans-serif;
}

.lang {
 width: 16px;
 height: 15px;
 line-height: 15px;
 text-align: center;
 font-size: 10px;
 color: #fff;
 background: #316ac5;
}

.taskbar > .lang {
 margin-left: auto;
}

.lang-dark {
 background: #000080;
}

.tray {
 display: flex;
 align-items: center;
 gap: 5px;
 width: 86px;
 height: 25px;
 margin-left: 10px;
 padding-left: 4px;
 border: 1px solid;
 border-color: #aca899 #fff #fff #aca899;
}

.tray time {
 margin-left: 3px;
}

/* sort dialog */
.dialog {
 position: absolute;
 left: 0;
 top: 116px;
 z-index: 5;
 width: 778px;
 padding: 3px;
 border: 1px solid;
 border-color: #f1efe2 #716f64 #716f64 #f1efe2;
 background: #ece9d8;
 box-shadow: inset 1px 1px #fff, inset -1px -1px #aca899;
 font: 11px/14px "DejaVu Sans Condensed", "Noto Sans", sans-serif;
 color: #000;
}

.dialog-title {
 display: flex;
 align-items: center;
 gap: 2px;
 height: 25px;
 padding: 0 2px 0 1px;
 background: linear-gradient(90deg, #0054e3, #3d95ff);
 font-size: 12px;
 font-weight: bold;
 color: #fff;
}

.dialog-title span {
 flex: 1;
}

.cap {
 display: flex;
 align-items: center;
 justify-content: center;
 width: 16px;
 height: 20px;
 padding: 0;
 border: 1px solid;
 border-color: #fff #716f64 #716f64 #fff;
 background: #ece9d8;
 font-size: 14px;
 color: #000;
}

.dialog-tools {
 display: flex;
 align-items: center;
 height: 38px;
 padding: 5px 8px 0 15px;
 white-space: nowrap;
}

.dialog-tools .flat {
 margin-right: 18px;
}

.dialog-tools .add {
 gap: 1px;
}

.dialog-tools .del,
.dialog-tools .dup {
 gap: 5px;
 margin-left: 4px;
}

.dialog-tools .dup {
 gap: 2px;
 margin-right: 11px;
}

.bar {
 width: 1px;
 height: 26px;
 margin-right: 10px;
 background: #000;
}

.headers {
 display: flex;
 align-items: center;
 gap: 7px;
 margin-left: auto;
 color: #aca899;
 text-shadow: 1px 1px #fff;
}

.headers input {
 appearance: none;
 width: 12px;
 height: 12px;
 border: 1px solid;
 border-color: #716f64 #fff #fff #716f64;
}

.headers input:checked::after {
 content: "";
 display: block;
 width: 7px;
 height: 3px;
 margin: 2px 0 0 1px;
 border: 2px solid #aca899;
 border-width: 0 0 2px 2px;
 transform: rotate(-45deg);
}

.levels {
 height: 171px;
 margin: 0 6px;
 border: 1px solid;
 border-color: #716f64 #fff #fff #716f64;
 background: #fff;
}

.levels-head,
.levels-row {
 display: grid;
 grid-template-columns: 256px 254px 1fr;
 background: #ece9d8;
}

.levels-head span {
 height: 18px;
 padding: 2px 3px;
 border: 1px solid;
 border-color: #fff #716f64 #716f64 #fff;
}

.levels-row {
 height: 22px;
 padding-right: 2px;
}

.by {
 display: flex;
 gap: 10px;
 padding: 0 10px 0 2px;
 white-space: nowrap;
}

.by .drop {
 flex: 1;
 margin-right: 0;
}

.drop {
 position: relative;
 height: 20px;
 margin: 1px 11px 0 1px;
 border: 1px solid;
 border-color: #716f64 #f1efe2 #f1efe2 #716f64;
 background: #fff;
}

.drop:last-child {
 margin-right: 0;
}

.drop select {
 width: 100%;
 height: 18px;
 padding: 0 2px;
 border: 0;
 appearance: none;
 background: none;
}

.drop::before {
 content: "";
 position: absolute;
 right: 1px;
 top: 1px;
 width: 15px;
 height: 16px;
 border: 1px solid;
 border-color: #fff #716f64 #716f64 #fff;
 background: #ece9d8;
 pointer-events: none;
}

.drop::after {
 content: "";
 position: absolute;
 right: 5px;
 top: 8px;
 border: 4px solid transparent;
 border-top-color: #000;
 border-bottom: 0;
 pointer-events: none;
}

.dialog-actions {
 display: flex;
 justify-content: flex-end;
 gap: 8px;
 padding: 3px 6px 6px;
}

.action {
 width: 76px;
 height: 24px;
 border: 1px solid;
 border-color: #fff #716f64 #716f64 #fff;
 background: #ece9d8;
}

.default {
 border: 1px solid #000;
 outline: 1px dotted #000;
 outline-offset: -4px;
 box-shadow: inset -1px -1px #716f64, inset 1px 1px #fff;
}

.resize {
 position: absolute;
 right: 2px;
 bottom: 2px;
}
```
